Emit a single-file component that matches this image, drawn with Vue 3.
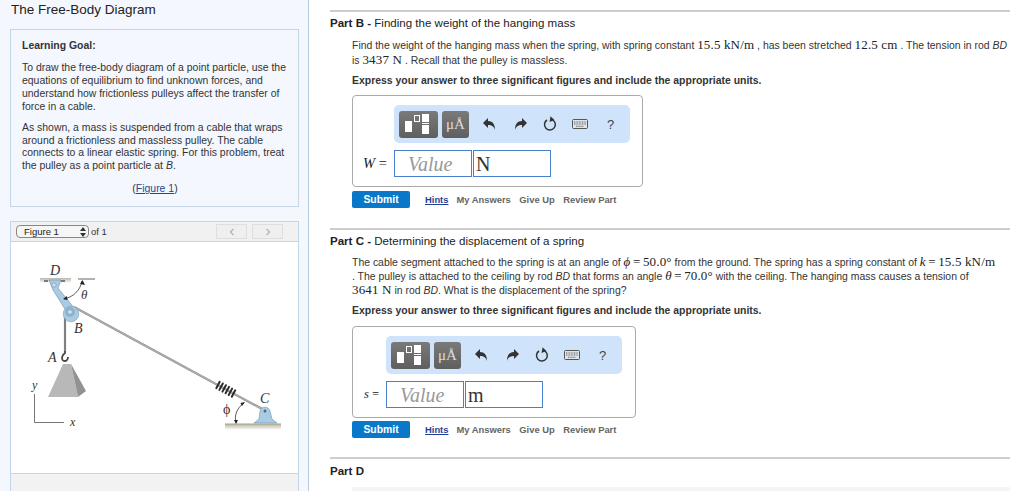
<script setup>
const links = ['My Answers', 'Give Up', 'Review Part']
const coils = [0, 1, 2, 3, 4, 5].map((i) => {
  const x = 217 + i * 3.1
  const y = 384 + i * 1.7
  return `M${x + 1.7} ${y - 3.2}L${x - 1.7} ${y + 3.2}`
})
</script>

<template>
  <div class="page">
    <aside class="left">
      <h1 class="title">The Free-Body Diagram</h1>
      <section class="goal">
        <p class="goal-head">Learning Goal:</p>
        <p class="goal-p">To draw the free-body diagram of a point particle, use the<br>equations of equilibrium to find unknown forces, and<br>understand how frictionless pulleys affect the transfer of<br>force in a cable.</p>
        <p class="goal-p">As shown, a mass is suspended from a cable that wraps<br>around a frictionless and massless pulley. The cable<br>connects to a linear elastic spring. For this problem, treat<br>the pulley as a point particle at <i>B</i>.</p>
        <p class="goal-link">(<a>Figure 1</a>)</p>
      </section>
      <section class="figure">
        <div class="fig-head">
          <div class="select"><span>Figure 1</span><svg width="6" height="10" viewBox="0 0 6 10"><path d="M3 0 6 4H0ZM3 10 0 6H6Z" fill="#333"/></svg></div>
          <span class="of">of 1</span>
          <div class="pager">
            <span class="page-btn"><svg width="6" height="8" viewBox="0 0 6 8"><path d="M4.500 1 1.500 4 4.500 7" fill="none" stroke="#b5b5b5" stroke-width="1.300"/></svg></span>
            <span class="page-btn"><svg width="6" height="8" viewBox="0 0 6 8"><path d="M1.500 1 4.500 4 1.500 7" fill="none" stroke="#b5b5b5" stroke-width="1.300"/></svg></span>
          </div>
        </div>
        <div class="fig-body">
          <svg class="diagram" width="288" height="231" viewBox="10 241 288 231">
            <defs>
              <linearGradient id="ground" x1="0" y1="0" x2="0" y2="1">
                <stop offset="0" stop-color="#b9b5a2"/>
                <stop offset="1" stop-color="#ffffff"/>
              </linearGradient>
            </defs>
            <rect x="39" y="277" width="31" height="5" fill="url(#ground)"/>
            <rect x="224" y="423" width="56" height="6" fill="url(#ground)"/>
            <line x1="77" y1="278" x2="94" y2="278" stroke="#666"/>
            <line x1="224" y1="423" x2="280" y2="423" stroke="#a5a392"/>

            <path d="M48 279H60L57 287 74 308 67 313 52 289Z" fill="#a9cbe4" stroke="#5d7f97" stroke-width=".5"/>
            <rect x="43" y="279" width="4" height="2" fill="#64809a"/>
            <rect x="60" y="279" width="4" height="2" fill="#64809a"/>
            <circle cx="53" cy="284" r="2.200" fill="#cfe2f0" stroke="#5d7f97" stroke-width=".5"/>
            <line x1="64" y1="316" x2="64" y2="350" stroke="#808080" stroke-width="2.200"/>
            <line x1="73" y1="306" x2="263" y2="409" stroke="#8f8f8f" stroke-width="2.200"/>
            <line x1="73" y1="306" x2="263" y2="409" stroke="#dcdcdc" stroke-width=".5"/>
            <circle cx="70" cy="313" r="7.800" fill="#a8cce6" stroke="#6f92aa" stroke-width=".5"/>
            <circle cx="69" cy="311" r="5" fill="#8fb3cb"/>
            <circle cx="69" cy="311" r="1.800" fill="#d3e4ef"/>

            <path d="M64 350V352C61 354 60 358 62 359.500 65 361 67 359 67 356" fill="none" stroke="#444" stroke-width="1.800"/>
            <path d="M62 363H70L77 396H47Z" fill="#b8b8b8"/>
            <path d="M70 363 85 390 77 396Z" fill="#929292"/>

            <path v-for="(d, i) in coils" :key="i" :d="d" stroke="#2d2d2d" stroke-width="2" stroke-linecap="round" fill="none"/>

            <path d="M253 422 258 418 259 410C260 405 268 405 269 410L271 418 276 422Z" fill="#a9cbe4" stroke="#6f92aa" stroke-width=".6"/>
            <circle cx="264" cy="410" r="1.500" fill="#54697a"/>

            <path d="M63 298C72 296 79 290 81 280" fill="none" stroke="#333" stroke-width=".8"/>
            <path d="M81.500 279 84 284 79 283ZM62 298 66 295 66.500 299Z" fill="#222"/>
            <path d="M243 402C236 407 233 414 235 422" fill="none" stroke="#333" stroke-width=".8"/>
            <path d="M244 401 241 405 239.500 402ZM235 423 233 419 237 419Z" fill="#222"/>

            <path d="M33.500 393V421.500H63" fill="none" stroke="#777"/>

            <text x="49" y="274" class="lab big">D</text>
            <text x="80" y="298" class="lab">θ</text>
            <text x="73" y="332" class="lab big">B</text>
            <text x="47" y="361" class="lab big">A</text>
            <text x="31" y="388" class="lab small">y</text>
            <text x="69" y="425" class="lab small">x</text>
            <text x="259" y="402" class="lab big">C</text>
            <text x="222" y="413" class="lab up">ϕ</text>
          </svg>
        </div>
        <div class="fig-foot"></div>
      </section>
    </aside>

    <main class="right">
      <section class="part part-b">
        <h2 class="part-title"><b>Part B - </b>Finding the weight of the hanging mass</h2>
        <div class="part-body">
          <p class="prompt">Find the weight of the hanging mass when the spring, with spring constant <span class="m">15.5 kN/m</span> , has been stretched <span class="m">12.5 cm</span> . The tension in rod <i>BD</i><br>is <span class="m">3437 N</span> . Recall that the pulley is massless.</p>
          <p class="instr">Express your answer to three significant figures and include the appropriate units.</p>
          <div class="answer answer-b">
            <div class="tools">
              <div class="tool-btn wide">
                <svg width="39" height="28" viewBox="0 0 39 28"><rect x="6" y="11" width="7" height="11" fill="#fff"/><rect x="15.500" y="5.500" width="5" height="6" fill="none" stroke="#fff"/><rect x="23" y="4" width="7" height="8" fill="#fff"/><rect x="23" y="13" width="7" height="1" fill="#fff"/><rect x="23" y="15" width="7" height="9" fill="#fff"/></svg>
              </div>
              <div class="tool-btn mu">μÅ</div>
              <svg class="ic ic-undo" width="13" height="13" viewBox="0 0 13 13"><path d="M0 5 5 0V3C9.500 3 12 6 12 12 11 8.500 9 7 5 7V10Z" fill="#333"/></svg>
              <svg class="ic ic-redo" width="13" height="13" viewBox="0 0 13 13"><path d="M13 5 8 0V3C3.500 3 1 6 1 12 2 8.500 4 7 8 7V10Z" fill="#333"/></svg>
              <svg class="ic ic-reload" width="14" height="16" viewBox="0 0 14 16"><path d="M9.500 3.800A5.400 5.400 0 1 1 4 4" fill="none" stroke="#333" stroke-width="1.500"/><path d="M7 0.500 11.500 3.500 7 6.500Z" fill="#333" transform="rotate(10 9 3.500)"/></svg>
              <svg class="ic ic-kbd" width="16" height="10" viewBox="0 0 16 10"><rect x=".5" y=".5" width="15" height="9" rx="1" fill="#dfe4e8" stroke="#555"/><path d="M2 3H14M2 5H14M4 7.300H12" stroke="#666" stroke-dasharray="1 .6"/></svg>
              <span class="help">?</span>
            </div>
            <div class="fields">
              <span class="var"><i>W</i> =</span>
              <div class="field value">Value</div>
              <div class="field unit">N</div>
            </div>
          </div>
          <div class="actions">
            <button class="submit">Submit</button>
            <a class="hints">Hints</a>
            <a v-for="l in links" :key="l" class="act">{{ l }}</a>
          </div>
        </div>
      </section>

      <section class="part part-c">
        <h2 class="part-title"><b>Part C - </b>Determining the displacement of a spring</h2>
        <div class="part-body">
          <p class="prompt">The cable segment attached to the spring is at an angle of <span class="m"><i>ϕ</i><span class="eq">=</span>50.0°</span> from the ground. The spring has a spring constant of <span class="m"><i>k</i><span class="eq">=</span>15.5 kN/m</span><br>. The pulley is attached to the ceiling by rod <i>BD</i> that forms an angle <span class="m"><i>θ</i><span class="eq">=</span>70.0°</span> with the ceiling. The hanging mass causes a tension of<br><span class="m">3641 N</span> in rod <i>BD</i>. What is the displacement of the spring?</p>
          <p class="instr">Express your answer to three significant figures and include the appropriate units.</p>
          <div class="answer answer-c">
            <div class="tools">
              <div class="tool-btn wide">
                <svg width="39" height="28" viewBox="0 0 39 28"><rect x="6" y="11" width="7" height="11" fill="#fff"/><rect x="15.500" y="5.500" width="5" height="6" fill="none" stroke="#fff"/><rect x="23" y="4" width="7" height="8" fill="#fff"/><rect x="23" y="13" width="7" height="1" fill="#fff"/><rect x="23" y="15" width="7" height="9" fill="#fff"/></svg>
              </div>
              <div class="tool-btn mu">μÅ</div>
              <svg class="ic ic-undo" width="13" height="13" viewBox="0 0 13 13"><path d="M0 5 5 0V3C9.500 3 12 6 12 12 11 8.500 9 7 5 7V10Z" fill="#333"/></svg>
              <svg class="ic ic-redo" width="13" height="13" viewBox="0 0 13 13"><path d="M13 5 8 0V3C3.500 3 1 6 1 12 2 8.500 4 7 8 7V10Z" fill="#333"/></svg>
              <svg class="ic ic-reload" width="14" height="16" viewBox="0 0 14 16"><path d="M9.500 3.800A5.400 5.400 0 1 1 4 4" fill="none" stroke="#333" stroke-width="1.500"/><path d="M7 0.500 11.500 3.500 7 6.500Z" fill="#333" transform="rotate(10 9 3.500)"/></svg>
              <svg class="ic ic-kbd" width="16" height="10" viewBox="0 0 16 10"><rect x=".5" y=".5" width="15" height="9" rx="1" fill="#dfe4e8" stroke="#555"/><path d="M2 3H14M2 5H14M4 7.300H12" stroke="#666" stroke-dasharray="1 .6"/></svg>
              <span class="help">?</span>
            </div>
            <div class="fields">
              <span class="var small-var"><i>s</i> =</span>
              <div class="field value">Value</div>
              <div class="field unit">m</div>
            </div>
          </div>
          <div class="actions">
            <button class="submit">Submit</button>
            <a class="hints">Hints</a>
            <a v-for="l in links" :key="l" class="act">{{ l }}</a>
          </div>
        </div>
      </section>

      <section class="part part-d">
        <h2 class="part-title"><b>Part D</b></h2>
        <div class="part-d-strip"></div>
      </section>
    </main>
  </div>
</template>

<style>
html, body { margin: 0; background: #fff; overflow: hidden; }
</style>

<style scoped>
.page {
  display: flex;
  width: 1024px;
  height: 491px;
  overflow: hidden;
  font-family: "Liberation Sans", Arial, sans-serif;
  color: #333;
}
p, h1, h2 { margin: 0; }

.left {
  width: 309px;
  height: 491px;
  flex: none;
  box-sizing: border-box;
  padding: 0 10px 0 10px;
  background: #f4f8fe;
  border-right: 1px solid #b5cade;
}
.title {
  font-size: 13.5px;
  font-weight: 400;
  line-height: 20px;
  color: #222;
  height: 29px;
  padding-left: 1px;
}
.goal {
  box-sizing: border-box;
  width: 289px;
  height: 178px;
  border: 1px solid #c2d6e8;
  padding: 9px 10px 0 11px;
  font-size: 10.45px;
  line-height: 13px;
}
.goal-head { font-weight: 700; margin-bottom: 10px; }
.goal-p { margin-bottom: 8px; line-height: 12.9px; }
.goal-link { text-align: center; margin-top: 9px; }
.goal-link a { color: #1a4a9c; text-decoration: underline; }

.figure {
  margin-top: 14px;
  width: 289px;
  box-sizing: border-box;
  border: 1px solid #c2d6e8;
  border-bottom: 0;
  background: #fff;
}
.fig-head {
  height: 19px;
  display: flex;
  align-items: center;
  padding: 0 15px 0 5px;
  background: #f1f1f1;
  border-bottom: 1px solid #c2d6e8;
  font-size: 9.5px;
}
.select {
  box-sizing: border-box;
  width: 73px;
  height: 13px;
  display: flex;
  align-items: center;
  justify-content: space-between;
  padding: 0 2px 0 7px;
  border: 1px solid #888;
  border-radius: 4px;
  background: #f6f6f6;
  color: #222;
}
.of { margin-left: 2px; }
.pager { margin-left: auto; display: flex; gap: 5px; }
.page-btn {
  box-sizing: border-box;
  width: 31px;
  height: 15px;
  display: flex;
  align-items: center;
  justify-content: center;
  border: 1px solid #dedede;
  background: #efefef;
}
.fig-body { height: 231px; background: #fff; }
.diagram { display: block; }
.lab { font-family: "Liberation Serif", serif; font-style: italic; font-size: 13px; fill: #333; }
.lab.big { font-size: 14px; }
.lab.small { font-size: 12px; }
.lab.up { font-style: normal; font-size: 14px; }
.fig-foot {
  height: 20px;
  border-top: 1px solid #c2d6e8;
  background: #f2f2f2;
}

.right { flex: 1; padding: 10px 14px 0 21px; min-width: 0; }
.part { border-top: 2px solid #cdcdcd; }
.part-title {
  font-size: 11.55px;
  font-weight: 400;
  line-height: 14px;
  padding-top: 4px;
  color: #222;
}
.part-title b { font-weight: 700; }
.part-body { padding-left: 22px; }
.prompt {
  font-size: 10.45px;
  line-height: 15px;
  margin-top: 8px;
  white-space: nowrap;
  color: #333;
}
.m { font-family: "Liberation Serif", serif; font-size: 13px; letter-spacing: .15px; color: #222; line-height: 0; }
.eq { margin: 0 2.5px; }
.instr {
  font-size: 10.45px;
  font-weight: 700;
  line-height: 14px;
  margin-top: 6px;
  white-space: nowrap;
  color: #333;
}
.answer {
  box-sizing: border-box;
  height: 92px;
  margin-top: 7px;
  border: 1px solid #aaa;
  border-radius: 4px;
  padding-top: 9px;
}
.answer-b { width: 291px; padding-left: 41px; }
.answer-c { width: 284px; padding-left: 33px; }
.tools {
  width: 236px;
  height: 38px;
  box-sizing: border-box;
  display: flex;
  align-items: center;
  padding-left: 5px;
  background: #cfe4fb;
  border-radius: 5px;
}
.tool-btn {
  height: 27px;
  border-radius: 3px;
  background: linear-gradient(#7a7a7a, #5f5f5f);
  display: flex;
  align-items: center;
  justify-content: center;
}
.tool-btn.wide { width: 39px; }
.tool-btn.mu {
  width: 27px;
  margin-left: 4px;
  font-family: "Liberation Serif", serif;
  font-size: 15px;
  color: #ddd;
}
.ic { flex: none; }
.ic-undo { margin-left: 14px; }
.ic-redo { margin-left: 18px; }
.ic-reload { margin-left: 16px; }
.ic-kbd { margin-left: 15px; }
.help { margin-left: 19px; font-size: 13px; color: #444; }
.fields {
  display: flex;
  align-items: center;
  margin-top: 7px;
  position: relative;
}
.var {
  position: absolute;
  right: calc(100% + 7px);
  text-align: right;
  font-family: "Liberation Serif", serif;
  font-size: 14.5px;
  color: #222;
  white-space: nowrap;
}
.small-var { font-size: 12.5px; }
.field {
  box-sizing: border-box;
  width: 78px;
  height: 27px;
  border: 1px solid #4a7fd0;
  font-family: "Liberation Serif", serif;
  line-height: 27px;
  background: #fff;
}
.field.value {
  padding-left: 13px;
  font-style: italic;
  font-size: 20px;
  color: #999;
}
.field.unit {
  margin-left: 1px;
  padding-left: 2px;
  font-size: 20px;
  color: #333;
}
.actions {
  display: flex;
  align-items: center;
  margin-top: 4px;
  height: 17px;
  font-size: 9.4px;
  font-weight: 700;
}
.submit {
  width: 58px;
  height: 17px;
  padding: 0;
  border: 0;
  border-radius: 2px;
  background: #0a78c9;
  color: #fff;
  font: 700 10.4px "Liberation Sans", Arial, sans-serif;
  margin-right: 15px;
}
.hints { color: #1f3f96; text-decoration: underline; margin-right: 8px; }
.act { color: #666; margin-right: 8.5px; }

.part-b { height: 216px; }
.part-c { height: 227px; }
.part-c .prompt { line-height: 14px; margin-top: 8px; }
.part-c .instr { margin-top: 6px; }
.part-c .answer { margin-top: 8px; }
.part-c .actions { margin-top: 3px; }
.part-d .part-title { padding-top: 5px; }
.part-d-strip { margin: 9px 0 0 22px; height: 20px; background: #f5f5f5; }
</style>
